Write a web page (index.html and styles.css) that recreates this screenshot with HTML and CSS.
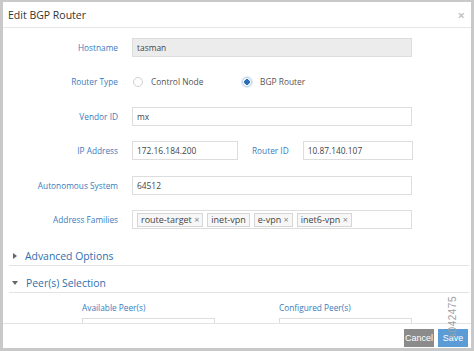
FILE: index.html
```html
<!doctype html>
<html lang="en">
  <head>
    <meta charset="UTF-8" />
    <title>Edit BGP Router</title>
    <link rel="stylesheet" href="styles.css">
  </head>
  <body>
    <div class="modal">
      <div class="modal-header">
        <span class="modal-title">Edit BGP Router</span>
        <span class="close">&times;</span>
      </div>

      <div class="modal-body">
        <div class="form">
          <div class="form-row">
            <label class="form-label">Hostname</label>
            <div class="input readonly">tasman</div>
          </div>
          <div class="form-row">
            <label class="form-label">Router Type</label>
            <div class="radio-group">
              <span class="radio"></span><span class="radio-text first">Control Node</span>
              <span class="radio checked"></span><span class="radio-text">BGP Router</span>
            </div>
          </div>
          <div class="form-row">
            <label class="form-label">Vendor ID</label>
            <div class="input">mx</div>
          </div>
          <div class="form-row">
            <label class="form-label">IP Address</label>
            <div class="input short">172.16.184.200</div>
            <label class="inline-label">Router ID</label>
            <div class="input short-right">10.87.140.107</div>
          </div>
          <div class="form-row">
            <label class="form-label">Autonomous System</label>
            <div class="input">64512</div>
          </div>
          <div class="form-row">
            <label class="form-label">Address Families</label>
            <div class="input tags">
              <span class="tag">route-target <i>&times;</i></span>
              <span class="tag">inet-vpn</span>
              <span class="tag">e-vpn <i>&times;</i></span>
              <span class="tag">inet6-vpn <i>&times;</i></span>
            </div>
          </div>
        </div>

        <div class="section">
          <span class="caret right"></span>Advanced Options
        </div>
        <div class="section">
          <span class="caret down"></span>Peer(s) Selection
        </div>

        <div class="peers">
          <div class="peer-col">
            <div class="peer-label">Available Peer(s)</div>
            <div class="peer-box"></div>
          </div>
          <div class="peer-col">
            <div class="peer-label">Configured Peer(s)</div>
            <div class="peer-box"></div>
          </div>
        </div>
      </div>

      <div class="modal-footer">
        <button class="btn cancel">Cancel</button>
        <button class="btn save">Save</button>
      </div>

      <span class="figure-id">s042475</span>
    </div>
  </body>
</html>
```

FILE: styles.css
```css
body {
  margin: 0;
  padding: 2px 3px 3px 3px;
  background-color: #c9c9c9;
  font-family: "Open Sans", "Liberation Sans", sans-serif;
}
.modal {
  position: relative;
  height: 346px;
  background: white;
  display: flex;
  flex-direction: column;
}
.modal-header {
  height: 25px;
  padding: 0 6px 0 5px;
  border-bottom: 1px solid #e6e6e6;
  display: flex;
  align-items: center;
  justify-content: space-between;
}
.modal-title {
  font-size: 10.5px;
  color: #333;
}
.close {
  font-size: 13px;
  font-weight: bold;
  color: #c4c4c4;
}
.modal-body {
  flex: 1;
  overflow: hidden;
  padding-top: 9.5px;
}
.form-row {
  display: flex;
  align-items: center;
  height: 19px;
  margin-bottom: 15.6px;
}
.form-row:last-child {
  margin-bottom: 0;
}
.form-label {
  width: 115px;
  margin-right: 14px;
  text-align: right;
  font-size: 8.3px;
  color: #3a7bbd;
}
.inline-label {
  margin: 0 14px;
  font-size: 8.3px;
  color: #3a7bbd;
}
.input {
  box-sizing: border-box;
  width: 280px;
  height: 19px;
  border: 1px solid #ddd;
  padding: 0 4px;
  font-size: 8.4px;
  line-height: 17px;
  color: #444;
}
.input.readonly {
  background-color: #ececec;
}
.input.short {
  width: 106px;
}
.input.short-right {
  width: 110px;
}
.radio-group {
  display: flex;
  align-items: center;
  font-size: 8.4px;
  color: #555;
}
.radio {
  box-sizing: border-box;
  width: 10px;
  height: 10px;
  margin-left: 1px;
  border: 1px solid #d0d0d0;
  border-radius: 50%;
  background: white;
}
.radio.checked {
  border-color: #b9cde2;
  background: radial-gradient(circle, #2c6fb8 0 2.6px, white 3px);
  box-shadow: 0 0 1px 1px #e0eaf5;
}
.radio-text {
  margin-left: 8px;
}
.radio-text.first {
  width: 90px;
}
.tags {
  display: flex;
  align-items: center;
  gap: 4px;
  padding-left: 4px;
}
.tag {
  box-sizing: border-box;
  height: 14px;
  padding: 0 3px;
  border: 1px solid #d6d6d6;
  background: #f7f7f7;
  font-size: 9px;
  line-height: 12px;
  color: #444;
}
.tag i {
  font-style: normal;
  color: #888;
}
.form {
  margin-bottom: 9.5px;
}
.section {
  box-sizing: border-box;
  height: 27px;
  margin: 0 2px 0 6px;
  padding: 10px 0 2px 3px;
  border-bottom: 1px solid #e3e3e3;
  font-size: 10.4px;
  line-height: 14px;
  color: #2f6fae;
  display: flex;
  align-items: center;
}
.caret {
  width: 0;
  height: 0;
  margin-right: 8px;
}
.caret.right {
  border-top: 3.5px solid transparent;
  border-bottom: 3.5px solid transparent;
  border-left: 4px solid #666;
  margin-left: 1px;
}
.caret.down {
  border-left: 3.5px solid transparent;
  border-right: 3.5px solid transparent;
  border-top: 4px solid #666;
  margin-right: 8px;
}
.peers {
  display: flex;
  gap: 64px;
  padding: 9px 0 0 79px;
}
.peer-col {
  width: 133px;
}
.peer-label {
  font-size: 8.3px;
  line-height: 12px;
  color: #3a7bbd;
  margin-bottom: 4px;
}
.peer-box {
  height: 60px;
  border: 1px solid #ddd;
}
.modal-footer {
  box-sizing: border-box;
  height: 25px;
  border-top: 1px solid #e3e3e3;
  display: flex;
  justify-content: flex-end;
  align-items: flex-start;
  gap: 4px;
  padding: 5px 3px 0 0;
}
.btn {
  height: 18px;
  width: 30px;
  padding: 0;
  border: none;
  font-family: "Liberation Sans", Arial, sans-serif;
  font-size: 9px;
  color: white;
}
.cancel {
  background-color: #8b8b8b;
}
.save {
  background-color: #5b9bd6;
}
.figure-id {
  position: absolute;
  top: 294px;
  right: 13px;
  writing-mode: vertical-rl;
  transform: rotate(180deg);
  font-family: "Liberation Sans", Arial, sans-serif;
  font-size: 10px;
  color: #a0a0a0;
  letter-spacing: 0.5px;
}
```
